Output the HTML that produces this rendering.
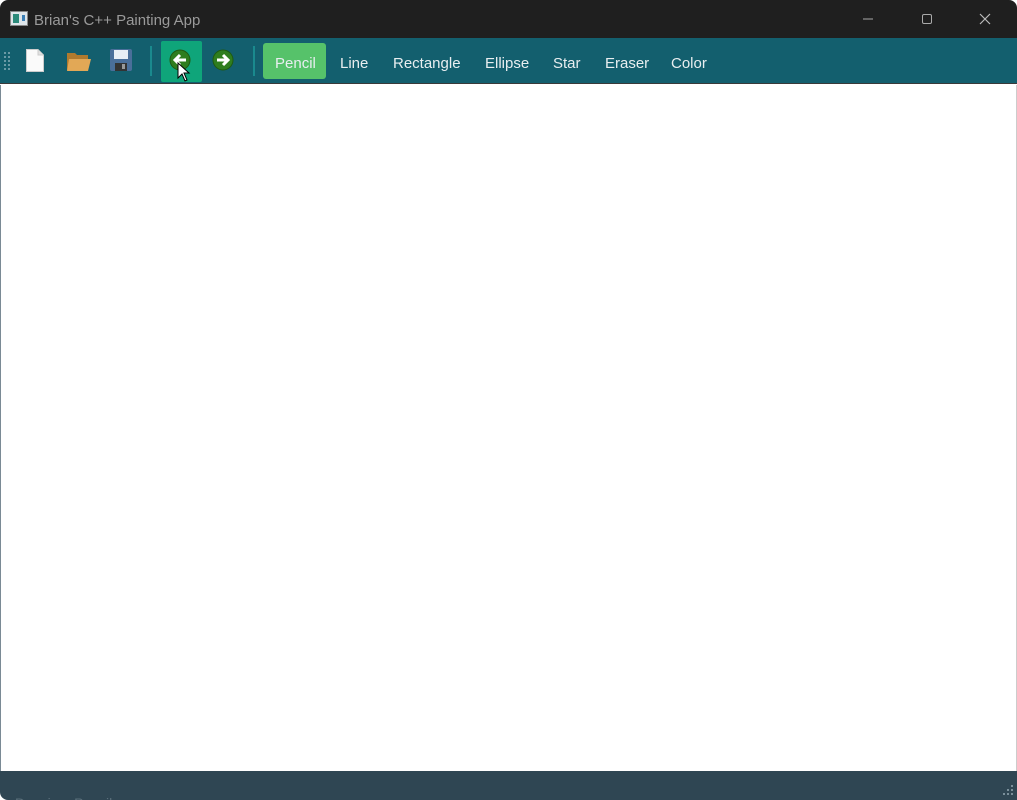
<!DOCTYPE html>
<html><head><meta charset="utf-8"><style>
*{margin:0;padding:0;box-sizing:border-box}
body{width:1017px;height:800px;overflow:hidden;background:#fff;font-family:"Liberation Sans",sans-serif;position:relative}
#title{position:absolute;left:0;top:0;width:1017px;height:38px;background:#1f1f1f;border-radius:8px 8px 0 0}
#title .t{position:absolute;left:34px;top:12px;color:#9a9a9a;font-size:15px}
#tb{position:absolute;left:0;top:38px;width:1017px;height:46px;background:#135f6e;border-bottom:1px solid #3a3a3a}
.txt{position:absolute;top:17px;color:#e8eef0;font-size:15px}
#canvas{position:absolute;left:0;top:85px;width:1017px;height:686px;background:#fff;border-left:1px solid #7a8a95;border-right:1px solid #ccc}
#status{position:absolute;left:0;top:771px;width:1017px;height:29px;background:#2f4653;border-radius:0 0 0 8px;overflow:hidden}
.sep{position:absolute;top:8px;width:2px;height:30px;background:#1a8a8e}
</style></head><body>
<div id="title">
<svg style="position:absolute;left:10px;top:11px" width="18" height="15"><rect x="0.5" y="0.5" width="17" height="14" fill="#dfe6ea" stroke="#888"/><rect x="3" y="3" width="6" height="9" fill="#2c8a7a"/><rect x="12" y="4" width="3" height="6" fill="#3b7fb5"/></svg>
<div class="t">Brian's C++ Painting App</div>
<svg style="position:absolute;left:862px;top:13px" width="12" height="12"><line x1="1" y1="6" x2="11" y2="6" stroke="#aaa"/></svg>
<svg style="position:absolute;left:921px;top:13px" width="12" height="12"><rect x="1.5" y="1.5" width="9" height="9" rx="1.5" fill="none" stroke="#aaa"/></svg>
<svg style="position:absolute;left:979px;top:13px" width="12" height="12"><path d="M1 1L11 11M11 1L1 11" stroke="#bbb" stroke-width="1.2"/></svg>
</div>
<div id="tb">
<svg style="position:absolute;left:4px;top:14px" width="8" height="20"><g fill="#6a9aa6"><rect x="0" y="0" width="2" height="2"/><rect x="4" y="0" width="2" height="2"/><rect x="0" y="4" width="2" height="2"/><rect x="4" y="4" width="2" height="2"/><rect x="0" y="8" width="2" height="2"/><rect x="4" y="8" width="2" height="2"/><rect x="0" y="12" width="2" height="2"/><rect x="4" y="12" width="2" height="2"/><rect x="0" y="16" width="2" height="2"/><rect x="4" y="16" width="2" height="2"/></g></svg>
<svg style="position:absolute;left:26px;top:11px" width="18" height="23"><path d="M0.5 0.5H12L17.5 6V22.5H0.5Z" fill="#fafafa" stroke="#ccc"/><path d="M12 0.5V6H17.5" fill="#e0e0e0" stroke="#ccc"/></svg>
<svg style="position:absolute;left:66px;top:12px" width="26" height="22"><path d="M1 3H9L11 5H22V20H1Z" fill="#b07a2e"/><path d="M3 9H25L22 21H1Z" fill="#e2a856"/></svg>
<svg style="position:absolute;left:110px;top:11px" width="22" height="22"><rect x="0" y="0" width="22" height="22" rx="2" fill="#4a6f9a"/><rect x="4" y="1" width="14" height="9" fill="#e8eef5"/><rect x="5" y="14" width="12" height="8" fill="#333"/><rect x="12" y="15" width="3" height="5" fill="#999"/></svg>
<div class="sep" style="left:150px"></div>
<div style="position:absolute;left:161px;top:3px;width:41px;height:41px;background:#0fa57a;border-radius:2px"></div>
<svg style="position:absolute;left:169px;top:11px" width="22" height="22"><circle cx="11" cy="11" r="10" fill="#2f7d1e" stroke="#1e5a12"/><path d="M17 11H7M11 6L6 11L11 16" stroke="#fff" stroke-width="3" fill="none"/></svg>
<svg style="position:absolute;left:177px;top:24px" width="14" height="20"><path d="M1 1V16L5 12L8 19L10 18L7 11H12Z" fill="#fff" stroke="#000"/></svg>
<svg style="position:absolute;left:212px;top:11px" width="22" height="22"><circle cx="11" cy="11" r="10" fill="#2f7d1e" stroke="#1e5a12"/><path d="M5 11H15M11 6L16 11L11 16" stroke="#fff" stroke-width="3" fill="none"/></svg>
<div class="sep" style="left:253px"></div>
<div style="position:absolute;left:263px;top:5px;width:63px;height:36px;background:#56c26a;border-radius:3px"></div>
<div class="txt" style="left:275px">Pencil</div>
<div class="txt" style="left:340px">Line</div>
<div class="txt" style="left:393px">Rectangle</div>
<div class="txt" style="left:485px">Ellipse</div>
<div class="txt" style="left:553px">Star</div>
<div class="txt" style="left:605px">Eraser</div>
<div class="txt" style="left:671px">Color</div>
</div>
<div id="canvas"></div>
<div id="status">
<div style="position:absolute;left:15px;top:24px;color:#5a6f7a;font-size:14px">Drawing: Pencil</div>
<svg style="position:absolute;left:1003px;top:14px" width="12" height="12"><g fill="#7a8f9a"><rect x="8" y="0" width="2" height="2"/><rect x="4" y="4" width="2" height="2"/><rect x="8" y="4" width="2" height="2"/><rect x="0" y="8" width="2" height="2"/><rect x="4" y="8" width="2" height="2"/><rect x="8" y="8" width="2" height="2"/></g></svg>
</div>
</body></html>
